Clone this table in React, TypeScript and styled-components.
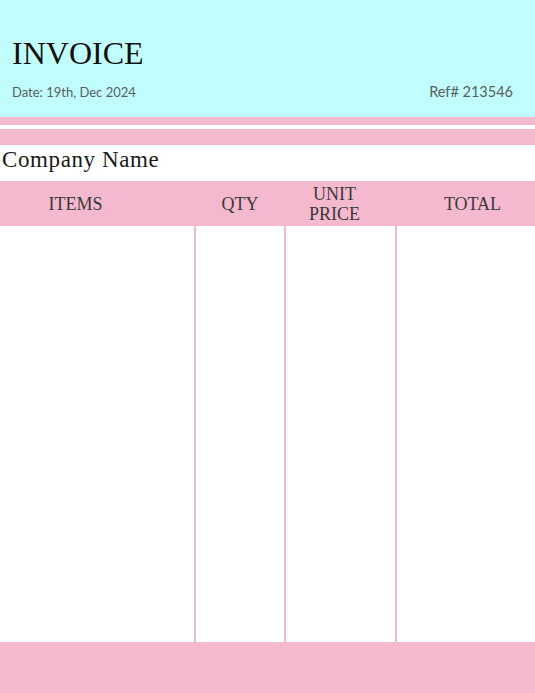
import React from "react";
import styled, { createGlobalStyle } from "styled-components";

const Global = createGlobalStyle`
  html, body { margin: 0; padding: 0; background: #ffffff; }
  #root { width: 535px; height: 693px; }
`;

const PINK = "#f4b8cf";
const CYAN = "#c1fdfd";
const SLAB = `"Liberation Serif", "DejaVu Serif", serif`;
const SANS = `Lato, "Open Sans", sans-serif`;

const Page = styled.div`
  width: 535px;
  height: 693px;
  display: flex;
  flex-direction: column;
  overflow: hidden;
`;

const Header = styled.header`
  height: 117px;
  background: ${CYAN};
  box-sizing: border-box;
  padding: 36px 22px 0 12px;
  display: flex;
  flex-direction: column;
`;

const Title = styled.h1`
  margin: 0;
  font-family: ${SLAB};
  font-weight: 400;
  font-size: 32px;
  line-height: 34px;
  color: #111111;
`;

const MetaRow = styled.div`
  margin-top: 13px;
  display: flex;
  justify-content: space-between;
  align-items: baseline;
  font-family: ${SANS};
  color: #566060;
`;

const Meta = styled.span<{ $size?: number }>`
  font-size: ${(p) => p.$size ?? 13}px;
`;

const Stripe = styled.div<{ $h: number; $color: string }>`
  height: ${(p) => p.$h}px;
  background: ${(p) => p.$color};
  flex: none;
`;

const Company = styled.div`
  height: 36px;
  box-sizing: border-box;
  padding: 0 0 6px 2px;
  font-family: ${SLAB};
  font-size: 23px;
  letter-spacing: 0.6px;
  line-height: 26px;
  color: #1a1a1a;
  display: flex;
  align-items: center;
`;

const COLS = "195px 90px 111px 1fr";

const HeadRow = styled.div`
  height: 45px;
  background: ${PINK};
  display: grid;
  grid-template-columns: ${COLS};
  flex: none;
`;

const HeadCell = styled.div<{ $shift: number }>`
  display: flex;
  align-items: center;
  justify-content: center;
  text-align: center;
  font-family: ${SLAB};
  font-size: 18px;
  line-height: 20px;
  color: #3a3a3a;
  transform: translateX(${(p) => p.$shift}px);
`;

const Body = styled.div`
  height: 416px;
  display: grid;
  grid-template-columns: ${COLS};
  flex: none;
`;

const Col = styled.div<{ $last?: boolean }>`
  border-right: ${(p) => (p.$last ? "none" : `2px solid ${PINK}`)};
  margin-right: ${(p) => (p.$last ? 0 : -1)}px;
`;

const Footer = styled.footer`
  flex: 1;
  background: ${PINK};
`;

export default function App() {
  return (
    <Page>
      <Global />
      <Header>
        <Title>INVOICE</Title>
        <MetaRow>
          <Meta>Date: 19th, Dec 2024</Meta>
          <Meta $size={14.5}>Ref# 213546</Meta>
        </MetaRow>
      </Header>
      <Stripe $h={8} $color={PINK} />
      <Stripe $h={4} $color="#ffffff" />
      <Stripe $h={16} $color={PINK} />
      <Company>Company Name</Company>
      <HeadRow>
        <HeadCell $shift={-22}>ITEMS</HeadCell>
        <HeadCell $shift={0}>QTY</HeadCell>
        <HeadCell $shift={-6}>
          UNIT
          <br />
          PRICE
        </HeadCell>
        <HeadCell $shift={7}>TOTAL</HeadCell>
      </HeadRow>
      <Body>
        <Col />
        <Col />
        <Col />
        <Col $last />
      </Body>
      <Footer />
    </Page>
  );
}
